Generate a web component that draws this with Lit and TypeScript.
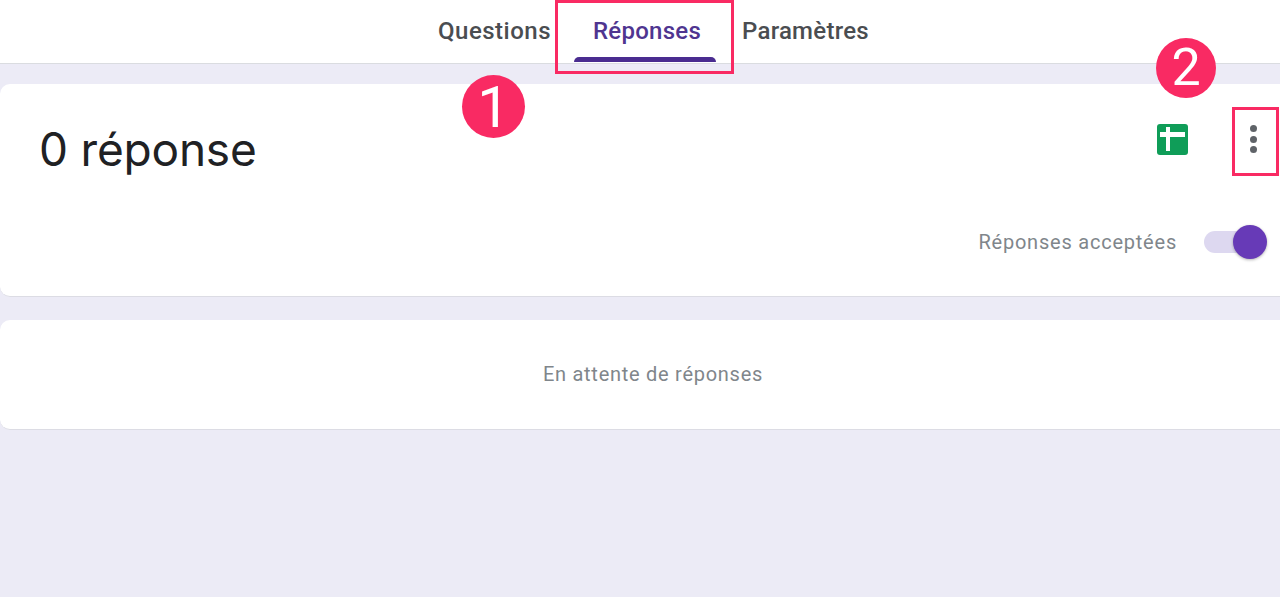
import { LitElement, html, css } from "lit";
import { customElement } from "lit/decorators.js";

@customElement("app-root")
export class AppRoot extends LitElement {
  static styles = css`
    :host { display: block; position: relative; width: 1280px; height: 597px; overflow: hidden; background: #ecebf6; font-family: Roboto, "Liberation Sans", sans-serif; }
    .header { height: 63px; background: #fff; border-bottom: 1px solid #dadce0; display: flex; padding-left: 438px; }
    .tab { font-size: 24px; font-weight: 500; letter-spacing: .25px; line-height: 62px; color: #4a4d51; white-space: nowrap; position: relative; }
    .tab.q { width: 155px; letter-spacing: .5px; }
    .tab.r { width: 149px; color: #4f3590; }
    .tab.r::after { content: ""; position: absolute; left: -19px; width: 142px; bottom: 1px; height: 5px; background: #4a2c90; border-radius: 5px 5px 0 0; }
    .cards { display: flex; flex-direction: column; gap: 23px; padding-top: 20px; margin-right: -12px; }
    .card { background: #fff; border-radius: 10px; border-bottom: 1px solid #dcdce4; box-sizing: border-box; }
    .summary { height: 213px; display: flex; flex-direction: column; padding: 31px 12px 0 39px; }
    .top { display: flex; align-items: flex-start; height: 95px; }
    h1 { margin: 0; font: 400 46px/68px Inter, sans-serif; color: #202124; flex: 1; letter-spacing: -0.2px; }
    .sheet { margin-top: 9px; width: 31px; height: 31px; display: block; }
    .more { margin: 10px 4px 0 42px; width: 46px; height: 32px; display: flex; flex-direction: column; align-items: center; gap: 3.5px; }
    .more i { width: 7px; height: 7px; border-radius: 50%; background: #5f6368; display: block; }
    .accept { display: flex; align-items: center; justify-content: flex-end; margin-top: 15px; padding-right: 13px; }
    .accept span { font-size: 20px; letter-spacing: .78px; color: #80868b; margin-right: 27px; }
    .switch { position: relative; width: 63px; height: 34px; }
    .track { position: absolute; left: 0; right: 8px; top: 6px; height: 22px; border-radius: 11px; background: #ddd8f0; }
    .thumb { position: absolute; right: 0; top: 0; width: 34px; height: 34px; border-radius: 50%; background: #673ab7; box-shadow: 0 1px 3px rgba(0,0,0,.3); }
    .empty { height: 110px; display: flex; align-items: center; justify-content: center; font-size: 20px; letter-spacing: .73px; color: #80868b; padding-bottom: 2px; }
    .empty span { transform: translateX(7px); }
    .box { position: absolute; border: 3px solid #f92a63; box-sizing: border-box; pointer-events: none; }
    .b1 { left: 555px; top: 0; width: 179px; height: 74px; }
    .b2 { left: 1232px; top: 107px; width: 47px; height: 69px; }
    .badge { position: absolute; border-radius: 50%; background: #f92a63; color: #fff; display: flex; align-items: center; justify-content: center; font-family: Roboto, sans-serif; line-height: 1; }
    .n1 { left: 462px; top: 75px; width: 63px; height: 63px; font-size: 58px; }
    .n2 { left: 1156px; top: 38px; width: 60px; height: 60px; font-size: 52px; }
  `;

  render() {
    return html`
      <div class="header">
        <div class="tab q">Questions</div>
        <div class="tab r">Réponses</div>
        <div class="tab">Paramètres</div>
      </div>
      <div class="cards">
        <div class="card summary">
          <div class="top">
            <h1>0 réponse</h1>
            <svg class="sheet" viewBox="0 0 31 31">
              <rect width="31" height="31" rx="3" fill="#0f9d58"/>
              <path d="M3 8h6V3h4v5h15v5H13v14H9V13H3z" fill="#fff"/>
            </svg>
            <div class="more"><i></i><i></i><i></i></div>
          </div>
          <div class="accept">
            <span>Réponses acceptées</span>
            <div class="switch"><div class="track"></div><div class="thumb"></div></div>
          </div>
        </div>
        <div class="card empty"><span>En attente de réponses</span></div>
      </div>
      <div class="box b1"></div>
      <div class="box b2"></div>
      <div class="badge n1">1</div>
      <div class="badge n2">2</div>
    `;
  }
}
